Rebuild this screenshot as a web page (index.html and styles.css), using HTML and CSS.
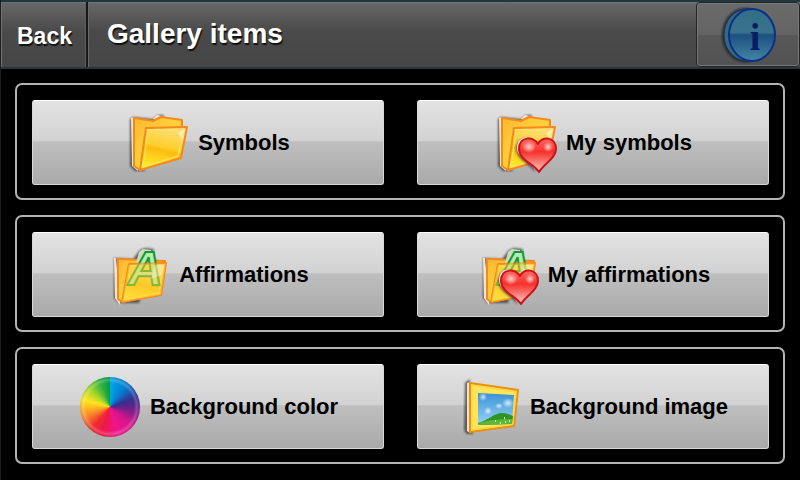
FILE: index.html
```
<!DOCTYPE html>
<html lang="en">
<head>
<meta charset="utf-8">
<meta name="viewport" content="width=device-width, initial-scale=1">
<title>Gallery items</title>
<link rel="stylesheet" href="styles.css">
</head>
<body>
<svg class="defs" aria-hidden="true">
  <defs>
    <linearGradient id="back" x1="0" y1="0" x2="1" y2="1"><stop offset="0" stop-color="#ffb82e"/><stop offset=".5" stop-color="#ffd23c"/><stop offset="1" stop-color="#ffa81c"/></linearGradient>
    <linearGradient id="front" x1="0.6" y1="0" x2="0.35" y2="1"><stop offset="0" stop-color="#ffdf78"/><stop offset=".46" stop-color="#ffcf2c"/><stop offset=".54" stop-color="#ffbc10"/><stop offset="1" stop-color="#fff02c"/></linearGradient>
    <linearGradient id="heartfill" x1="0" y1="0" x2="0" y2="1"><stop offset="0" stop-color="#ff6a60"/><stop offset=".4" stop-color="#f6302c"/><stop offset=".6" stop-color="#f8625c"/><stop offset="1" stop-color="#ffd0cc"/></linearGradient>
    <radialGradient id="shine"><stop offset="0" stop-color="#fff" stop-opacity=".75"/><stop offset="1" stop-color="#fff" stop-opacity="0"/></radialGradient>
    <linearGradient id="sky" x1="0" y1="0" x2="0" y2="1"><stop offset="0" stop-color="#3a92d8"/><stop offset="1" stop-color="#9ad4f4"/></linearGradient>
    <linearGradient id="disc" x1="0" y1="0" x2="0" y2="1"><stop offset="0" stop-color="#2f6f84"/><stop offset=".45" stop-color="#3a7290"/><stop offset=".5" stop-color="#1d5080"/><stop offset="1" stop-color="#4286a4"/></linearGradient>
    <filter id="soft" x="-20%" y="-20%" width="140%" height="140%"><feGaussianBlur stdDeviation="1"/></filter>
    <symbol id="folder" viewBox="0 0 60 60">
      <path d="M2 6L5 4 25 6 30 2H36L16 58 7 58 2 53Z" fill="#333" opacity=".75" filter="url(#soft)"/>
      <path d="M3 5L6 4 10 58 4 53ZM25 6L29 2 34 3 30 7Z" fill="#f3e3d3"/>
      <path d="M6 5L25 8 33 4 54 7V15L48 45 12 57 6 53Z" fill="url(#back)" stroke="#f7891b" stroke-width="2" stroke-linejoin="round"/>
      <path d="M18 15L59 14 53 45 12 57Z" fill="url(#front)" stroke="#f7891b" stroke-width="2" stroke-linejoin="round"/>
      <path d="M20 17L56 16 50 43 15 54Z" fill="none" stroke="#ffe36a" stroke-width="1"/>
      <path d="M57 16L55 27 50 20Z" fill="#fff" opacity=".45"/>
    </symbol>
    <symbol id="heart" viewBox="0 0 60 60" overflow="visible">
      <path d="M39 31C34 22 20 23 20 36C20 46 33 51 39 59Z" fill="#333" opacity=".7" filter="url(#soft)"/>
      <path d="M38 30C34 22 21 22 21 35C21 45 35 50 39 57Z" fill="#f4e4df"/>
      <path d="M42 31C45 23 60 23 60 36C60 45 48 51 43 59C38 51 23 47 23 36C23 23 38 23 42 31Z" fill="url(#heartfill)" stroke="#cf1018" stroke-width="2" stroke-linejoin="round"/>
      <ellipse cx="33" cy="34" rx="7" ry="6" fill="url(#shine)"/>
      <ellipse cx="52" cy="34" rx="5" ry="5" fill="url(#shine)"/>
    </symbol>
    <symbol id="letterfolder" viewBox="0 0 60 60">
      <path d="M5 13L24 14 31 5 36 3 45 4 30 58 10 58 5 53Z" fill="#333" opacity=".75" filter="url(#soft)"/>
      <path d="M6 13L10 57 7 53Z" fill="#f3e3d3" stroke="#f3e3d3" stroke-width="2"/>
      <path d="M9 14L32 15 56 16 50 49 13 57 9 54Z" fill="url(#back)" stroke="#f7891b" stroke-width="2" stroke-linejoin="round"/>
      <path d="M27 18L30 7 34 4 42 5 43 18Z" fill="#c9dcc6"/>
      <path d="M20 19L57 18 52 50 13 57Z" fill="url(#front)" stroke="#f7891b" stroke-width="2" stroke-linejoin="round"/>
      <path d="M22 21L54 20 50 48 16 54Z" fill="none" stroke="#ffe36a" stroke-width="1"/>
      <text class="mark" x="19" y="40">A</text>
      <path d="M20 19L57 18 52 50 13 57Z" fill="#ffd23c" opacity=".5"/>
      <path d="M20 19L57 18" stroke="#f7891b" stroke-width="2" opacity=".5"/>
      <path d="M46 20L55 20 53 30 42 34Z" fill="#fff" opacity=".35"/>
    </symbol>
  </defs>
</svg>

<header class="bar">
  <button class="back" type="button">Back</button>
  <h1 class="title">Gallery items</h1>
  <button class="info" type="button" aria-label="Information">
    <svg class="info-icon" viewBox="0 0 60 60" aria-hidden="true">
      <ellipse cx="27" cy="30" rx="23" ry="27" fill="#111" opacity=".7" filter="url(#soft)"/>
      <ellipse cx="29" cy="30" rx="23" ry="26" fill="#36697b" stroke="#12366c" stroke-width="1"/>
      <ellipse cx="34" cy="30" rx="23" ry="26" fill="url(#disc)" stroke="#0c2f88" stroke-width="2"/>
      <text class="info-mark" x="37" y="45">i</text>
    </svg>
  </button>
</header>

<main class="groups">
  <section class="group">
    <button class="tile" type="button">
      <svg class="icon" viewBox="0 0 60 60" aria-hidden="true"><use href="#folder"/></svg>
      <span>Symbols</span>
    </button>
    <button class="tile" type="button">
      <svg class="icon" viewBox="0 0 60 60" aria-hidden="true"><use href="#folder"/><use href="#heart"/></svg>
      <span>My symbols</span>
    </button>
  </section>
  <section class="group">
    <button class="tile" type="button">
      <svg class="icon" viewBox="0 0 60 60" aria-hidden="true"><use href="#letterfolder"/></svg>
      <span>Affirmations</span>
    </button>
    <button class="tile" type="button">
      <svg class="icon" viewBox="0 0 60 60" aria-hidden="true"><use href="#letterfolder"/><use href="#heart"/></svg>
      <span>My affirmations</span>
    </button>
  </section>
  <section class="group">
    <button class="tile" type="button">
      <span class="icon wheel"></span>
      <span>Background color</span>
    </button>
    <button class="tile" type="button">
      <svg class="icon" viewBox="0 0 60 60" aria-hidden="true">
        <path d="M6 6L9 4 12 56 7 56 5 53Z" fill="#333" stroke="#333" stroke-width="2" opacity=".7" filter="url(#soft)"/>
        <path d="M7 6L10 5V56L7 54Z" fill="#f3e3d3"/>
        <path d="M10 6L58 13 54 49 10 55Z" fill="#ffe45c" stroke="#e8920c" stroke-width="2" stroke-linejoin="round"/>
        <path d="M12 8L56 15 53 47 12 53Z" fill="none" stroke="#ffd23a" stroke-width="1"/>
        <path d="M18 16L54 18 52 47 18 48Z" fill="url(#sky)"/>
        <ellipse cx="23" cy="20" rx="4" ry="4" fill="url(#shine)"/>
        <ellipse cx="48" cy="26" rx="6" ry="5" fill="url(#shine)"/>
        <ellipse cx="39" cy="29" rx="4" ry="3" fill="url(#shine)"/>
        <ellipse cx="28" cy="34" rx="4" ry="4" fill="url(#shine)"/>
        <path d="M18 46C29 43 34 36 42 36C47 36 50 38 53 39L52 47 18 48Z" fill="#2f9426"/>
        <path d="M18 47C26 43 35 43 52 42V47L18 48Z" fill="#5cb838"/>
        <path d="M35 44h1M40 46h1M44 41h1M49 44h1M45 45h1" stroke="#e8ffb0" stroke-width="2"/>
      </svg>
      <span>Background image</span>
    </button>
  </section>
</main>
</body>
</html>
```
FILE: styles.css
```
* {
  box-sizing: border-box;
}

body {
  margin: 0;
  min-height: 100vh;
  background: #000;
  border-left: 1px solid #1c1e20;
  font-family: "Liberation Sans", Arial, sans-serif;
  font-weight: bold;
}

button {
  margin: 0;
  font: inherit;
  cursor: pointer;
}

.defs {
  position: absolute;
  width: 0;
  height: 0;
}

.bar {
  display: flex;
  height: 69px;
  border-top: 2px solid #1f3640;
  border-bottom: 2px solid #29363e;
  background: linear-gradient(#686868, #4a4a4a 45%, #464646);
  box-shadow: inset 0 1px #747474;
  color: #fff;
  text-shadow: 1px 2px 1px #111;
}

.back {
  padding: 3px 14px 0 16px;
  border: 0;
  border-right: 2px solid #181818;
  background: none;
  box-shadow: inset 1px 1px #727272, inset -1px 0 #5e5e5e;
  color: inherit;
  font-size: 23px;
  text-shadow: inherit;
}

.title {
  flex: 1;
  margin: 0;
  padding-left: 18px;
  border-left: 1px solid #6a6a6a;
  font-size: 28px;
  line-height: 64px;
}

.info {
  display: flex;
  align-items: center;
  justify-content: center;
  width: 104px;
  padding: 0;
  border: 1px solid #767676;
  border-radius: 4px;
  outline: 1px solid #242424;
  outline-offset: -1px;
  background: linear-gradient(#6b6b6b, #646464 50%, #585858 51%, #525252);
  box-shadow: inset 0 0 0 1px #787878;
}

.info-icon {
  width: 60px;
  height: 60px;
}

.info-mark {
  fill: #081c60;
  font: bold 38px "Liberation Serif", serif;
  text-anchor: middle;
  text-shadow: none;
}

.groups {
  display: grid;
  gap: 15px;
  padding: 14px 15px 15px 14px;
}

.group {
  display: grid;
  grid-template-columns: 1fr 1fr;
  gap: 33px;
  padding: 15px 14px 13px 15px;
  border: 2px solid #b4b4b4;
  border-radius: 7px;
}

.tile {
  display: flex;
  align-items: center;
  justify-content: center;
  gap: 10px;
  height: 85px;
  padding: 0 0 0 2px;
  border: 1px solid #d8d8d8;
  border-top-color: #fff;
  border-radius: 3px;
  background: linear-gradient(#e3e3e3, #d2d2d2 48%, #bfbfbf 49%, #aaa);
  color: #000;
  font-size: 22px;
  white-space: nowrap;
}

.icon {
  flex: none;
  width: 60px;
  height: 60px;
  overflow: visible;
}

.mark {
  fill: #b4ecb4;
  stroke: #119a30;
  stroke-width: 2px;
  font: italic bold 48px "Liberation Sans", sans-serif;
}

.wheel {
  border-radius: 50%;
  background:
    radial-gradient(closest-side, transparent 80%, rgba(255, 255, 255, 0.2) 90%, rgba(0, 0, 0, 0.08)),
    conic-gradient(#00a8ea, #0878cc 40deg, #343092 70deg, #702088 95deg, #d8148c 130deg, #f0148c 165deg, #ee1848 195deg, #f02c30 220deg, #f98a28 250deg, #ffe41c 285deg, #a8d82c 310deg, #2cb040 340deg, #009a48);
}
```
